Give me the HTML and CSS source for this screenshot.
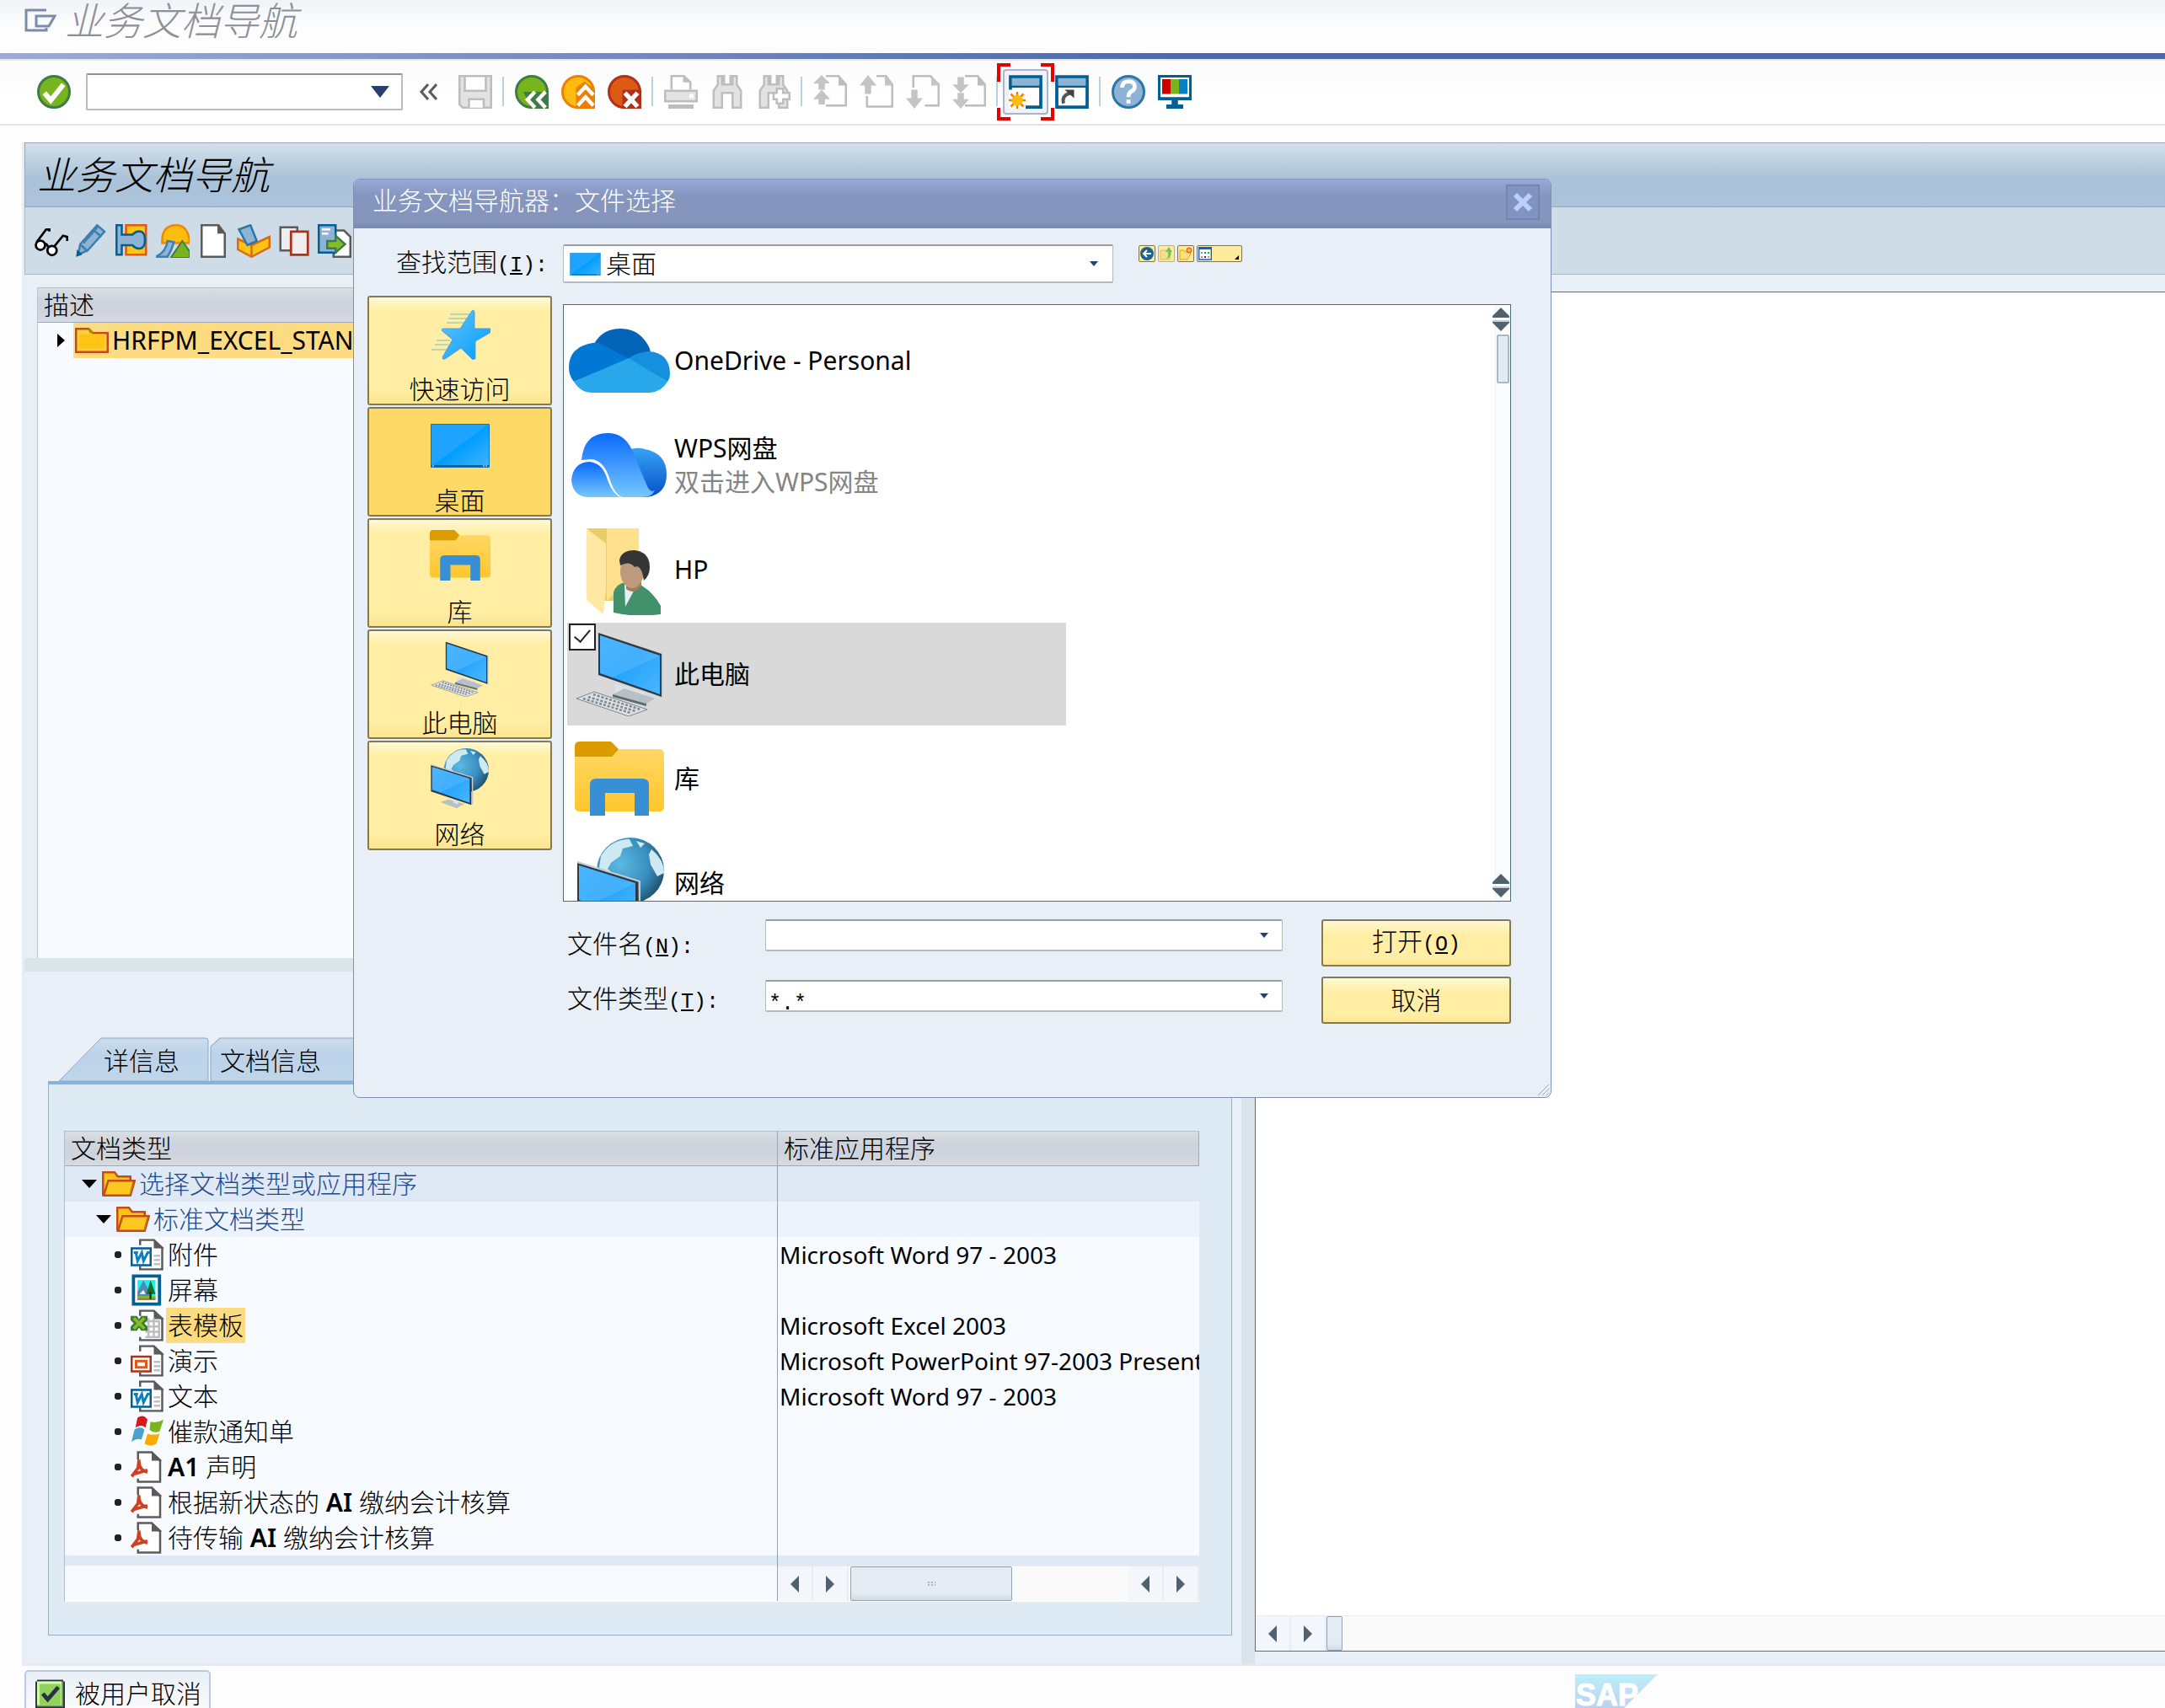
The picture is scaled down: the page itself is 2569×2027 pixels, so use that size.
FILE: index.html
```html
<!DOCTYPE html>
<html lang="zh-CN">
<head>
<meta charset="utf-8">
<title>业务文档导航</title>
<link rel="stylesheet" href="styles.css">
</head>
<body>
<svg class="defs" aria-hidden="true">
  <defs>
    <linearGradient id="gScreen" x1="0" y1="0" x2="1" y2="1"><stop offset="0" stop-color="#33acff"/><stop offset=".5" stop-color="#27a5fd"/><stop offset="1" stop-color="#4ab6ff"/></linearGradient>
    <linearGradient id="gDesk" x1="0" y1="0" x2="1" y2="1"><stop offset=".49" stop-color="#1ea4ff"/><stop offset=".5" stop-color="#009dff"/><stop offset="1" stop-color="#41b5ff"/></linearGradient>
    <linearGradient id="gFolder" x1="0" y1="0" x2="0" y2="1"><stop offset="0" stop-color="#ffd96b"/><stop offset="1" stop-color="#ffc62d"/></linearGradient>
    <linearGradient id="gStar" x1="0" y1="0" x2="1" y2="1"><stop offset="0" stop-color="#62c4ff"/><stop offset="1" stop-color="#009cfb"/></linearGradient>
    <linearGradient id="gWps" x1="0" y1="0" x2="0" y2="1"><stop offset="0" stop-color="#0a69fa"/><stop offset="1" stop-color="#76c8ff"/></linearGradient>
    <linearGradient id="gWps2" x1="0" y1="0" x2="0" y2="1"><stop offset="0" stop-color="#36a3f7"/><stop offset="1" stop-color="#0550c8"/></linearGradient>
    <radialGradient id="gGlobe" cx=".35" cy=".4" r=".7"><stop offset="0" stop-color="#5cb9e4"/><stop offset=".6" stop-color="#3a8fc0"/><stop offset="1" stop-color="#1d4f6c"/></radialGradient>
    <linearGradient id="gTab" x1="0" y1="0" x2="0" y2="1"><stop offset="0" stop-color="#cbdcec"/><stop offset=".4" stop-color="#bdd3e9"/><stop offset="1" stop-color="#bfd5ea"/></linearGradient>
    <linearGradient id="gSap" x1="0" y1="0" x2="0" y2="1"><stop offset="0" stop-color="#bdeefb"/><stop offset="1" stop-color="#bacde9"/></linearGradient>
  </defs>
  <symbol id="page" viewBox="0 0 16 16"><path d="M2.500.5h8l3 4v11h-11z" fill="#fff" stroke="#5b5b5b"/><path d="M10 .5v4h4z" fill="#5b5b5b"/></symbol>
  <symbol id="gpage" viewBox="0 0 16 16"><path d="M6 .5h6l3.500 4v10H7M15.500 14.500H6" fill="none" stroke="#bdbdbd"/><path d="M12 0v5h4z" fill="#bdbdbd"/></symbol>
  <symbol id="tri-l" viewBox="0 0 10 20"><path d="M10 0v20L0 10z" fill="#50616f"/></symbol>
  <symbol id="tri-r" viewBox="0 0 10 20"><path d="M0 0v20L10 10z" fill="#50616f"/></symbol>
  <symbol id="bino" viewBox="0 0 16 16"><path d="M3.500 .5h2v4h5v-4h2v4l2 3v8h-4v-7h-5v7h-4v-8l2-3z" fill="#e2e2e2" stroke="#bdbdbd"/><path d="M7 0h2v4H7z" fill="#fff"/><path d="M6.500 0v4.500M9.500 0v4.500" stroke="#bdbdbd"/></symbol>
  <symbol id="folder" viewBox="0 0 16 12"><path d="M.5.5h6l2 2h7v9H.5z" fill="#ffd041" stroke="#c74a1e"/><path d="M2 3h12v7H2z" fill="#ffc414"/><path d="M6 .5h1l2 2H7z" fill="#b38600"/></symbol>
  <symbol id="ofolder" viewBox="0 0 16 12"><path d="M.5 11.500V.5h5.500l1.500 2h6v3" fill="#ffc414" stroke="#c74a1e"/><path d="M3 4.500h12.500l-2 7H.8z" fill="#ffc821" stroke="#c74a1e"/><path d="M14.800 5l-1.500 6" stroke="#b38600" stroke-width=".6"/></symbol>
  <symbol id="docright" viewBox="0 0 16 15"><path d="M4.500 3V.5h6.500l4 4v10H4.500V13" fill="#fff" stroke="#5b5b5b"/><path d="M11 0v4.500h5z" fill="#5b5b5b"/></symbol>
  <symbol id="word" viewBox="0 0 16 15"><use href="#docright" width="16" height="15"/><path d="M11 8h3M11 10h3M11 12h3" stroke="#c0c0c0"/><path d="M.5 4.500h9v8h-9z" fill="#fff" stroke="#005f94"/><path d="M1.500 6.500h2M2.500 6.500l.8 4 2-4 .8 4 2-4h1" fill="none" stroke="#0a80c4" stroke-width="1.200"/></symbol>
  <symbol id="ppt" viewBox="0 0 16 15"><use href="#docright" width="16" height="15"/><path d="M11 8h3M11 10h3M11 12h3" stroke="#c0c0c0"/><path d="M.5 5.500h9v7h-9z" fill="#fff" stroke="#b0301a"/><path d="M2.600 7.600h4.800v3H2.600z" fill="#fff" stroke="#dc5a14" stroke-width="1.200"/></symbol>
  <symbol id="xls" viewBox="0 0 16 15"><use href="#docright" width="16" height="15"/><path d="M7 5.500h7M7 8h7M7 10.500h7M7 13h7M8.500 4v9M11 4v9M13.500 5v8" stroke="#bdbdbd"/><path d="M0 3h3l1 1.500L5 3h3v2L6.500 6.500 8 8v2H5L4 8.500 3 10H0V8l1.500-1.500L0 5z" fill="#3f7a35"/><path d="M1.500 4L6.500 9M6.500 4L1.500 9" stroke="#86bc25" stroke-width="1.500"/></symbol>
  <symbol id="pic" viewBox="0 0 16 16"><path d="M1 1h13v14H1z" fill="#fff" stroke="#005f94" stroke-width="1.600"/><path d="M3 3h9v10H3z" fill="#12f4f4"/><path d="M3 9l3-6 3 6v3H3z" fill="#5588b0"/><path d="M4 10l2-2 1 2z" fill="#fff"/><path d="M3 11h9v1H3z" fill="#86bc25"/><path d="M3 12h9v1H3z" fill="#a97b1d"/><path d="M9.500 3l2.500 7H7.500z" fill="#176b2c"/><path d="M9.500 9v3.500" stroke="#0c3d17"/></symbol>
  <symbol id="win" viewBox="0 0 16 16"><path d="M3 1q3-2 5 1L7 6Q5 4 2 6z" fill="#d41a1a"/><path d="M9.500 3q3 1 6.500-1l-2 6q-3 1-5-1z" fill="#7ab51d"/><path d="M1.500 7q3-2 5 0L5 12Q3 11 0 13z" fill="#4aa0cf"/><path d="M8 9q3 1 6 0l-1.500 5q-3 2-6 0z" fill="#f8ab00"/></symbol>
  <symbol id="pdf" viewBox="0 0 16 15"><path d="M3.500 4V.5h6.500l4 4v10H3.500V13" fill="#fff" stroke="#5b5b5b"/><path d="M10 0v4.500h5z" fill="#5b5b5b"/><path d="M4 4l-.5 4-3 4M4 5q0 4 4 5M1 11l7-2" fill="none" stroke="#cc4222" stroke-width="1.500"/></symbol>
  <symbol id="desk" viewBox="0 0 70 52"><path d="M.5.5h69v51H.5z" fill="url(#gDesk)" stroke="#1272b4"/><path d="M1 49h68v2H1z" fill="#0a5f9c"/><path d="M2 50h2M62 50h2M65 50h2" stroke="#fff" stroke-width="1"/></symbol>
  <symbol id="lib" viewBox="0 0 106 88"><path d="M0 6q0-6 6-6h36l8 9h50q6 0 6 6v62q0 6-6 6H6q-6 0-6-6z" fill="url(#gFolder)"/><path d="M0 18V6q0-6 6-6h36q2 0 4 3l6 6-6 7q-1 2-3 2z" fill="#dc9b00"/><path d="M18 88V51q0-7 8-7h54q8 0 8 7v37H71V61H36v27z" fill="#388fd6"/></symbol>
  <symbol id="pc" viewBox="0 0 104 100"><path d="M46 74V62l34 10v8z" fill="#dfe3e6"/><path d="M43 74l14-7 36 12-10 6z" fill="#b7c0c6"/><path d="M43 74v3l40 11v-3z" fill="#5d6a72"/><path d="M27 1l76 25v51l-3 1z" fill="#c8d0d6"/><path d="M26 1l75 25v51L26 51z" fill="#2b3a45"/><path d="M28 4l71 24v46L28 49z" fill="url(#gScreen)"/><path d="M28 4l71 24L43 54l-15-5z" fill="#fff" opacity=".12"/><path d="M0 79l21-8 63 21-22 8z" fill="#dde1e3" stroke="#7d878d"/><path d="M8 79l56 17M14 77l56 17M20 74l56 18" stroke="#7f888e" stroke-width="2.500" stroke-dasharray="3 2"/></symbol>
  <symbol id="net" viewBox="0 0 104 108"><ellipse cx="63" cy="39" rx="40" ry="39" fill="url(#gGlobe)"/><path d="M28 22q12-20 34-20l4 8-12 3-3 9-11 8-5 9-9-3zM88 14q15 12 15 28l-8 4-8-14-2-12zM33 36l6 3 1 10-6-2zM70 4l10 3-5 5z" fill="#cdeaf3"/><path d="M17 96l14-5 29 8-14 8z" fill="#b7c0c6"/><path d="M40 82l8 3v15l-8-3z" fill="#dfe3e6"/><path d="M0 30l72 22v49L0 77z" fill="#2b3a45"/><path d="M2 33l67 21v43L2 74z" fill="url(#gScreen)"/><path d="M2 33l67 21-52 25-15-5z" fill="#fff" opacity=".12"/><path d="M0 29l74 23v48" fill="none" stroke="#c3ccd2" stroke-width="2"/></symbol>
  <symbol id="vscroll" viewBox="0 0 22 28"><path d="M11 0l10 10v2H1v-2z" fill="#50616f"/><path d="M1 15h20v3L11 28 1 18z" fill="#50616f"/><path d="M1 15h20v2H1z" fill="#c8cccf"/></symbol>
</svg>

<header class="titlebar">
  <svg class="sys-icon" viewBox="0 0 38 28"><path d="M26 2H2v24h24v-3M14 9h22l-7 12H14z" fill="none" stroke="#7d8bab" stroke-width="3"/></svg>
  <h1>业务文档导航</h1>
</header>

<nav class="std-toolbar" aria-label="标准工具栏">
  <button class="ib" aria-label="确认"><svg viewBox="0 0 16 16"><circle cx="8" cy="8" r="7.400" fill="#78b41e" stroke="#3e7b46" stroke-width="1.200"/><path d="M3.500 8.500l3 3.500L12.500 4.500" fill="none" stroke="#fff" stroke-width="2.400"/></svg></button>
  <div class="command"><input type="text" aria-label="命令"><button aria-label="命令历史"><svg viewBox="0 0 22 14"><path d="M0 0h22L11 14z" fill="#29406f"/></svg></button></div>
  <button class="collapse" aria-label="收起"><svg viewBox="0 0 22 20"><path d="M11 1L3 10l8 9M21 1l-8 9 8 9" fill="none" stroke="#5b5b5b" stroke-width="3"/></svg></button>
  <button class="ib" aria-label="保存"><svg viewBox="0 0 16 16"><path d="M.5.5h15v15H2L.5 14z" fill="#e2e2e2" stroke="#bdbdbd"/><path d="M3 .5h10v7H3zM5 15.500V11.500h7v4" fill="#fff" stroke="#bdbdbd"/></svg></button>
  <span class="sep"></span>
  <div class="grp">
    <button class="ib" aria-label="后退"><svg viewBox="0 0 16 16"><circle cx="8" cy="8" r="7.400" fill="#78b41e" stroke="#3e7b46" stroke-width="1.200"/><path d="M4 8h12v8H8z" fill="#3e7b46"/><path d="M9.500 8L6 11.700l3.500 3.800M14.500 8L11 11.700l3.500 3.800" fill="none" stroke="#fff" stroke-width="1.800"/></svg></button>
    <button class="ib" aria-label="退出"><svg viewBox="0 0 16 16"><circle cx="8" cy="8" r="7.400" fill="#fdbd10" stroke="#ee7f00" stroke-width="1.200"/><path d="M7 6l4-3 5 4v9H7z" fill="#ee7f00"/><path d="M7.800 9.500L11.500 5.500l3.700 4M7.800 14.500l3.700-4 3.700 4" fill="none" stroke="#fff" stroke-width="1.800"/></svg></button>
    <button class="ib" aria-label="取消"><svg viewBox="0 0 16 16"><circle cx="8" cy="8" r="7.400" fill="#dc5a14" stroke="#b0301a" stroke-width="1.200"/><path d="M7 7h9v9H7z" fill="#b0301a"/><path d="M8.200 8.500l6 6.500M14.200 8.500l-6 6.500" stroke="#fff" stroke-width="2.200"/></svg></button>
  </div>
  <span class="sep"></span>
  <div class="grp">
    <button class="ib" aria-label="打印"><svg viewBox="0 0 16 16"><path d="M3.500 7V.5h6l3 3V7" fill="#fff" stroke="#bdbdbd"/><path d="M9 .5v3h3.500z" fill="#bdbdbd"/><path d="M.5 7.500h15v5H.5z" fill="#e2e2e2" stroke="#bdbdbd"/><path d="M12 9h2v2h-2z" fill="#fff"/><path d="M2 14h12v2H2z" fill="#bdbdbd"/></svg></button>
    <button class="ib" aria-label="查找"><svg><use href="#bino"/></svg></button>
    <button class="ib" aria-label="继续查找"><svg viewBox="0 0 16 16"><use href="#bino" width="16" height="16"/><path d="M9.500 6.500h3v2h3v3h-3v2h-3v-2H8v-3h1.500z" fill="#fff" stroke="#bdbdbd"/></svg></button>
  </div>
  <span class="sep"></span>
  <div class="grp">
    <button class="ib" aria-label="首页"><svg viewBox="0 0 16 16"><use href="#gpage" width="16" height="16"/><path d="M4 0l4 4H5.500v3H2.500V4H0zM4 7l4 4.500H5.500V14H2.500v-2.500H0z" fill="#c4c4c4"/></svg></button>
    <button class="ib" aria-label="上一页"><svg viewBox="0 0 16 16"><path d="M3.500 10v5h12V4.500l-3-4H8" fill="none" stroke="#bdbdbd"/><path d="M12 0v5h4zM4 0l4 5H5.500v4H2.500V5H0z" fill="#c4c4c4"/></svg></button>
    <button class="ib" aria-label="下一页"><svg viewBox="0 0 16 16"><path d="M3.500 6V.5h8l4 4v10H9" fill="none" stroke="#bdbdbd"/><path d="M12 0v5h4zM4 16l4-5H5.500V7H2.500v4H0z" fill="#c4c4c4"/></svg></button>
    <button class="ib" aria-label="末页"><svg viewBox="0 0 16 16"><use href="#gpage" width="16" height="16"/><path d="M4 8.500L8 4.500H5.500V1H2.500v3.500H0zM4 16l4-4.500H5.500V8.500H2.500v3H0z" fill="#c4c4c4"/></svg></button>
  </div>
  <span class="sep"></span>
  <div class="grp">
    <button class="ib focus" aria-label="创建新会话"><svg class="frame" viewBox="0 0 68 68"><rect x="8" y="8" width="52" height="52" rx="3" fill="#eff2f8" stroke="#aab4cf" stroke-width="2"/><path d="M2 22V2h14M52 2h14v20M2 53v13h14M52 66h14V53" fill="none" stroke="#e60000" stroke-width="4"/></svg><svg viewBox="0 0 16 16"><path d="M.8.8h14.400v14.400H.8z" fill="#fff" stroke="#005f94" stroke-width="1.500"/><path d="M1.500 1.500h13V5h-13z" fill="#8fb3d5"/><path d="M1 5.500h14" stroke="#005f94"/><path d="M0 7h8v9H0z" fill="#fff"/><path d="M4 8v8M0 12h8M1 9l6 6M7 9l-6 6" stroke="#ee7f00"/><circle cx="4" cy="12" r="2.600" fill="#fdbd10"/></svg></button>
    <button class="ib" aria-label="创建快捷方式"><svg viewBox="0 0 16 16"><path d="M.8.8h14.400v14.400H.8z" fill="#fff" stroke="#005f94" stroke-width="1.500"/><path d="M1.500 1.500h13V5h-13z" fill="#8fb3d5"/><path d="M1 5.500h14" stroke="#005f94"/><path d="M4 13.500q-1-4 3.500-5" fill="none" stroke="#555" stroke-width="1.600"/><path d="M4.500 7H9v4z" fill="#444"/></svg></button>
  </div>
  <span class="sep"></span>
  <div class="grp">
    <button class="ib" aria-label="帮助"><svg viewBox="0 0 16 16"><circle cx="8" cy="8" r="7.400" fill="#8fb3d5" stroke="#2a76a8" stroke-width="1.200"/><path d="M5 6q0-3 3-3t3 2.500q0 1.500-1.500 2.200T8 10.500M8 11.700v1.800" fill="none" stroke="#fff" stroke-width="1.900"/></svg></button>
    <button class="ib" aria-label="定制本地布局"><svg viewBox="0 0 16 16"><path d="M.6.6h14.800v10.800H.6z" fill="#fff" stroke="#005f94" stroke-width="1.200"/><path d="M2 2h4v7H2z" fill="#c80000"/><path d="M6 2h4v7H6z" fill="#78b41e"/><path d="M10 2h4v7h-4z" fill="#0a80c4"/><path d="M0 10.500h16V12H0zM6.500 12h3v2H12v2H4v-2h2.500z" fill="#005f94"/></svg></button>
  </div>
</nav>

<main class="window">
  <h2>业务文档导航</h2>
  <div class="app-toolbar">
    <button class="ib" aria-label="显示"><svg viewBox="0 0 16 16"><path d="M1 8.500L5.500 2.500h1.500v1M9 11L13.500 5.500 15.500 6v2M4.500 9.500q1.500-.5 2 1.500" fill="none" stroke="#000" stroke-width="1.100"/><circle cx="2.800" cy="10" r="2.200" fill="#fff" stroke="#000" stroke-width="1.100"/><circle cx="8.300" cy="12.500" r="2.200" fill="#fff" stroke="#000" stroke-width="1.100"/></svg></button>
    <button class="ib" aria-label="更改"><svg viewBox="0 0 16 16"><path d="M1.500 14.500l1-5 8-9 3.500 3-8 9z" fill="#8fb3d5" stroke="#3d7fae"/><path d="M3 10l3 3M4 9l7-8M8.500 2.500l4 3.500" stroke="#3d7fae"/><path d="M1 12l2.500 2.500L.5 15.500z" fill="#005f94"/></svg></button>
    <button class="ib" aria-label="其他对象"><svg viewBox="0 0 16 16"><path d="M5 .5h9.500v14H5z" fill="#ffc414" stroke="#dc5a14"/><path d="M.5.5H3V5h5q2-2 4-1.500t2 4-2 4-4-1.500H3v4.500H.5z" fill="#8fb3d5" stroke="#005f94"/></svg></button>
    <button class="ib" aria-label="全景"><svg viewBox="0 0 16 16"><path d="M3 9q-.5-8 6-8.500t7 8.500z" fill="#fdbd10" stroke="#ee8a00"/><path d="M0 15.500Q5 13 5.500 8l3 .5q-1 4-3 7z" fill="#8fb3d5" stroke="#3d7fae"/><path d="M7 16l5.500-8 3.500 5v3z" fill="#78b41e" stroke="#3e7b46" stroke-width=".8"/></svg></button>
    <button class="ib" aria-label="创建"><svg><use href="#page"/></svg></button>
    <button class="ib" aria-label="导入"><svg viewBox="0 0 16 16"><path d="M.5 7L7 10l8.500-4v5L7 15.500.5 12z" fill="#ffc414" stroke="#dc6a14"/><path d="M7 10v5.500" stroke="#dc6a14"/><path d="M1 2.500L6.500.5l3 7.500-4.500 2z" fill="#8fb3d5" stroke="#2a76a8"/></svg></button>
    <button class="ib" aria-label="复制"><svg viewBox="0 0 16 16"><path d="M1.500 1.500h8v11h-8z" fill="#eee" stroke="#5b5b5b"/><path d="M6.500 3.500h8v11h-8z" fill="#eee" stroke="#b0301a" stroke-width="1.100"/></svg></button>
    <button class="ib" aria-label="导出"><svg viewBox="0 0 16 16"><path d="M7.500 3h5l3 3v9.500h-8z" fill="#fff" stroke="#5b5b5b"/><path d="M.5.500h8v13h-8z" fill="#8fb3d5" stroke="#005f94"/><path d="M2 2.500h4M2 4.500h3" stroke="#fff"/><path d="M4.500 8h4V5.500l4.500 4-4.500 4V11.500h-4z" fill="#86bc25" stroke="#3e7b46"/></svg></button>
  </div>

  <div class="work">
    <section class="left">
      <div class="tree">
        <div class="th">描述</div>
        <div class="tree-row"><svg class="twist" viewBox="0 0 9 16"><path d="M0 0v16l9-8z"/></svg><span class="hit"><svg class="fold"><use href="#folder"/></svg>HRFPM_EXCEL_STAN</span></div>
      </div>
      <div class="split-h"></div>
      <div class="details">
        <div class="tabs" role="tablist">
          <button role="tab" class="tab first"><svg viewBox="0 0 180 52" preserveAspectRatio="none"><path d="M1 52L51 1h124q3 0 3 3v48z" fill="url(#gTab)" stroke="#8fa9c6"/></svg><span>详信息</span></button>
          <button role="tab" class="tab second"><svg viewBox="0 0 200 52" preserveAspectRatio="none"><path d="M1 52V11L11 1h189v51z" fill="url(#gTab)" stroke="#8fa9c6"/></svg><span>文档信息</span></button>
        </div>
        <div class="tabpanel">
          <table class="doctypes">
            <colgroup><col class="c1"><col></colgroup>
            <thead><tr><th>文档类型</th><th>标准应用程序</th></tr></thead>
            <tbody>
              <tr class="lv0"><td><div class="node"><svg class="open" viewBox="0 0 18 10"><path d="M0 0h18L9 10z"/></svg><svg class="fold"><use href="#ofolder"/></svg><span>选择文档类型或应用程序</span></div></td><td></td></tr>
              <tr class="lv1"><td><div class="node"><svg class="open" viewBox="0 0 18 10"><path d="M0 0h18L9 10z"/></svg><svg class="fold"><use href="#ofolder"/></svg><span>标准文档类型</span></div></td><td></td></tr>
              <tr><td><div class="node"><i></i><svg class="di"><use href="#word"/></svg><span>附件</span></div></td><td>Microsoft Word 97 - 2003</td></tr>
              <tr><td><div class="node"><i></i><svg class="di"><use href="#pic"/></svg><span>屏幕</span></div></td><td></td></tr>
              <tr><td><div class="node"><i></i><svg class="di"><use href="#xls"/></svg><span class="sel">表模板</span></div></td><td>Microsoft Excel 2003</td></tr>
              <tr><td><div class="node"><i></i><svg class="di"><use href="#ppt"/></svg><span>演示</span></div></td><td>Microsoft PowerPoint 97-2003 Presentation</td></tr>
              <tr><td><div class="node"><i></i><svg class="di"><use href="#word"/></svg><span>文本</span></div></td><td>Microsoft Word 97 - 2003</td></tr>
              <tr><td><div class="node"><i></i><svg class="di"><use href="#win"/></svg><span>催款通知单</span></div></td><td></td></tr>
              <tr><td><div class="node"><i></i><svg class="di"><use href="#pdf"/></svg><span><b>A1</b> 声明</span></div></td><td></td></tr>
              <tr><td><div class="node"><i></i><svg class="di"><use href="#pdf"/></svg><span>根据新状态的 <b>AI</b> 缴纳会计核算</span></div></td><td></td></tr>
              <tr><td><div class="node"><i></i><svg class="di"><use href="#pdf"/></svg><span>待传输 <b>AI</b> 缴纳会计核算</span></div></td><td></td></tr>
            </tbody>
            <tfoot>
              <tr class="band"><td></td><td></td></tr>
              <tr><td></td><td><div class="hscroll"><button aria-label="向左"><svg><use href="#tri-l"/></svg></button><button aria-label="向右"><svg><use href="#tri-r"/></svg></button><span class="thumb"><span class="grip"></span></span><span class="track"></span><button aria-label="向左"><svg><use href="#tri-l"/></svg></button><button aria-label="向右"><svg><use href="#tri-r"/></svg></button></div></td></tr>
            </tfoot>
          </table>
        </div>
      </div>
    </section>
    <div class="split-v"></div>
    <section class="editor">
      <div class="hscroll"><button aria-label="向左"><svg><use href="#tri-l"/></svg></button><button aria-label="向右"><svg><use href="#tri-r"/></svg></button><span class="thumb small"></span><span class="track"></span></div>
    </section>
  </div>
</main>

<footer class="status">
  <div class="message"><svg viewBox="0 0 36 36"><path d="M2 0h32v2h2v34H0V2h2z" fill="#2d2f45"/><path d="M2 2h32v31H2z" fill="#6e9c5c"/><path d="M2 2h30v29H2z" fill="#d2ffa6"/><path d="M5 5h26v26H5z" fill="#8fd35c"/><path d="M9 17l6 7L28 9" fill="none" stroke="#2d2f45" stroke-width="5"/></svg><span>被用户取消</span></div>
  <svg class="sap" viewBox="0 0 98 48"><path d="M0 0h98L50 48H0z" fill="url(#gSap)"/><text x="1" y="37" font-family="Liberation Sans, sans-serif" font-weight="700" font-size="36" fill="#fff" stroke="#fff">SAP</text></svg>
</footer>

<div class="dialog" role="dialog" aria-labelledby="dlg-title">
  <div class="dlg-head"><h3 id="dlg-title">业务文档导航器：文件选择</h3><button class="close" aria-label="关闭"><svg viewBox="0 0 24 24"><path d="M3 3l18 18M21 3L3 21" stroke="#b9d0ff" stroke-width="6"/></svg></button></div>
  <div class="lookin">
    <label for="look">查找范围<span class="key">(<u>I</u>):</span></label>
    <div class="combo big"><svg class="mini"><use href="#desk"/></svg><select id="look"><option>桌面</option></select><svg class="dd" viewBox="0 0 10 6"><path d="M0 0h10L5 6z" fill="#29406f"/></svg></div>
    <div class="minis">
      <button aria-label="返回"><svg viewBox="0 0 16 16"><circle cx="8" cy="8" r="8" fill="#1b6390"/><path d="M13 8H4M8 4L4 8l4 4" fill="none" stroke="#fff" stroke-width="2"/></svg></button>
      <button class="dim" aria-label="向上一级"><svg viewBox="0 0 16 16"><path d="M1 15V4h5l8 1-2 10z" fill="#f6df8c" stroke="#dcc05c"/><path d="M7 14q4-1 3-8H7l4-6 4 6h-2q1 8-6 8z" fill="#79c25a"/></svg></button>
      <button aria-label="新建文件夹"><svg viewBox="0 0 16 16"><path d="M1 15V4h5l1 2h5l2 2-4 7z" fill="#ffe07a" stroke="#d9a520"/><circle cx="12" cy="4" r="3" fill="#ffae3c" stroke="#e8401a"/></svg></button>
      <button class="wide" aria-label="查看"><svg viewBox="0 0 16 16"><path d="M.7 1h14.600v14H.7z" fill="#fff" stroke="#0b62d6" stroke-width="1.400"/><path d="M0 0h16v3H0z" fill="#0b62d6"/><path d="M3 6h2v2H3z" fill="#99a"/><path d="M7 6h2v2H7z" fill="#17c"/><path d="M11 6h2v2h-2z" fill="#2a3"/><path d="M3 11h2v2H3z" fill="#e74"/><path d="M7 11h2v2H7z" fill="#237"/><path d="M11 11h2v2h-2z" fill="#c92"/></svg><svg class="corner" viewBox="0 0 4 4"><path d="M4 0v4H0z"/></svg></button>
    </div>
  </div>
  <div class="dlg-body">
    <div class="places">
      <button class="place"><svg viewBox="0 0 72 60"><path d="M24 6h24M22 11h22M20 16h22M8 37h16M6 42h16M2 48h18" stroke="#a9cdb5" stroke-width="1.500"/><path d="M50 2q3-2 3 2v19h20q3 1 0 4L54 38v20q-1 3-4 1L37 46 18 59q-3 1-3-2l12-21-12-10q-2-3 2-3h19z" fill="url(#gStar)" stroke="#4f9fd6"/></svg><span>快速访问</span></button>
      <button class="place on"><svg><use href="#desk"/></svg><span>桌面</span></button>
      <button class="place"><svg><use href="#lib"/></svg><span>库</span></button>
      <button class="place"><svg><use href="#pc"/></svg><span>此电脑</span></button>
      <button class="place net"><svg><use href="#net"/></svg><span>网络</span></button>
    </div>
    <div class="right">
      <div class="filebox">
        <ul class="files">
          <li><svg viewBox="0 0 120 76"><path d="M30 18Q40 0 61 0t32 18q4 6 4 12L70 40 32 22z" fill="#0364b8"/><path d="M72 36L38 18q-5-2-10-1Q0 22 0 46q0 10 6 17z" fill="#0078d4"/><path d="M70 36q10-8 25-9 25 2 25 27 0 5-3 9z" fill="#1490df"/><path d="M6 63q8 13 22 13h68q14-1 21-13L71 35z" fill="#28a8ea"/></svg><span>OneDrive - Personal</span></li>
          <li><svg viewBox="0 0 120 76"><path d="M70 20q12-4 20-1 26 5 26 30 0 24-24 27H78z" fill="url(#gWps2)"/><path d="M15 32Q18 0 46 0q20 0 29 20l18 43q2 5 6 6l3-1q-4 8-14 8H64Q55 74 49 56 42 32 26 31z" fill="url(#gWps)"/><path d="M3 56q2-21 21-22 14 1 20 16 7 22 17 26H24Q5 76 3 56z" fill="url(#gWps)"/></svg><span>WPS网盘<br><em>双击进入WPS网盘</em></span></li>
          <li><svg viewBox="0 -5 120 108"><path d="M21 0h62v86H32z" fill="#eccb6a"/><path d="M83 0v50L45 86V0z" fill="#ffe08c"/><path d="M21 0l23 18v54l-3 30-20-17z" fill="#ffe7a4"/><path d="M53 100V76q3-10 14-12l16 2q16 8 26 26v10q-30 4-56-2z" fill="#43906d"/><path d="M66 66l14 3-13 24z" fill="#e2f1f3"/><path d="M68 50h18v18q-8 12-18 4z" fill="#a97b52"/><ellipse cx="75" cy="51" rx="14" ry="20" fill="#bc9a7b"/><path d="M60 38q2-12 18-12 18 2 18 20 0 10-7 16-3-20-11-16-6-8-17-2z" fill="#353535"/></svg><span>HP</span></li>
          <li class="picked"><input type="checkbox" checked aria-label="选择此电脑"><svg viewBox="0 0 120 100"><use href="#pc" x="9" width="104" height="100"/></svg><span>此电脑</span></li>
          <li><svg viewBox="0 0 120 88"><use href="#lib" x="7" width="106" height="88"/></svg><span>库</span></li>
          <li><svg viewBox="0 0 120 108"><use href="#net" x="10" width="104" height="108"/></svg><span>网络</span></li>
        </ul>
        <div class="vbar"><svg><use href="#vscroll"/></svg><span class="vthumb"></span><svg class="end"><use href="#vscroll"/></svg></div>
      </div>
      <div class="fields">
        <label for="fname">文件名<span class="key">(<u>N</u>):</span></label>
        <div class="combo"><input id="fname" type="text"><svg class="dd" viewBox="0 0 10 6"><path d="M0 0h10L5 6z" fill="#29406f"/></svg></div>
        <button class="act">打开<span class="key">(<u>O</u>)</span></button>
        <label for="ftype">文件类型<span class="key">(<u>T</u>):</span></label>
        <div class="combo type"><select id="ftype" class="key"><option>*.*</option></select><svg class="dd" viewBox="0 0 10 6"><path d="M0 0h10L5 6z" fill="#29406f"/></svg></div>
        <button class="act">取消</button>
      </div>
    </div>
  </div>
  <svg class="grip-c" viewBox="0 0 16 16"><path d="M2 15L15 2M7 15l8-8M12 15l3-3" stroke="#9aa7bb"/></svg>
</div>
</body>
</html>
```
FILE: styles.css
```css
* { box-sizing: border-box; }
body {
  margin: 0;
  height: 100vh;
  display: flex;
  flex-direction: column;
  position: relative;
  overflow: hidden;
  background: #fdfdfe;
  color: #000;
  font: 300 30px/42px "Noto Sans", "Noto Sans CJK SC", sans-serif;
}
h1, h2, h3 { margin: 0; font-weight: 300; }
b { font-weight: 600; }
button, input, select { font: inherit; color: inherit; margin: 0; padding: 0; border: 0; background: none; border-radius: 0; }
.defs { position: absolute; width: 0; height: 0; }
svg { display: block; flex: none; }

.titlebar {
  height: 72px;
  flex: none;
  display: flex;
  align-items: center;
  gap: 10px;
  padding: 0 0 24px 29px;
  background: linear-gradient(90deg, #9aabd9, #4a69b5 1400px) 0 63px / 100% 7px no-repeat,
    linear-gradient(#e4e8ec, #e4e8ec) 0 70px / 100% 2px no-repeat,
    linear-gradient(#f0f3f7, #fdfdfe 32px);
}
.sys-icon { width: 38px; height: 28px; }
h1, h2 { font-size: 46px; line-height: 48px; font-style: italic; }
h1 { color: #8c9197; }

.std-toolbar {
  height: 77px;
  flex: none;
  display: flex;
  align-items: center;
  padding: 0 44px 2px;
  background: linear-gradient(#fafafb, #fff 40px);
  border-bottom: 2px solid #e1e5ea;
}
.grp { display: flex; gap: 15px; }
.ib { width: 40px; height: 40px; flex: none; position: relative; }
.ib svg { width: 40px; height: 40px; position: relative; }
.ib .frame { position: absolute; left: -14px; top: -14px; width: 68px; height: 68px; }
.sep { width: 2px; height: 35px; margin: 0 13px 0 12px; background: #b9cfe4; }
.command { width: 376px; height: 44px; margin-left: 18px; display: flex; align-items: center; border: 2px solid #bbbcbe; border-top-color: #8e9093; border-radius: 2px; background: #fff; }
.command input { flex: 1; min-width: 0; height: 100%; }
.command button { width: 36px; }
.command button svg { width: 22px; height: 14px; }
.collapse { width: 22px; margin: 0 25px 0 19px; }
.collapse svg { width: 22px; height: 20px; }

.window { flex: 1; min-height: 0; display: flex; flex-direction: column; margin: 20px 0 0 26px; border-left: 3px solid #e8ecf4; background: #e8eff6; border-bottom: 2px solid #e4e9f1; }
h2 {
  height: 77px;
  padding: 13px 0 0 14px;
  border: 1px solid #93a9bb;
  border-right: 0;
  background: linear-gradient(#d3e1ec, #abc3d8 40px, #abc3db);
}
.app-toolbar { display: flex; gap: 8px; align-items: center; height: 80px; padding: 0 11px; background: #cedce7; border: 1px solid #a7b8c8; border-top: 0; border-right: 0; }

.work { flex: 1; min-height: 0; padding: 20px 0 0; display: grid; grid-template-columns: 1444fr 16px 1080fr; }
.left { display: flex; flex-direction: column; min-width: 0; min-height: 0; }
.tree { flex: 1; margin: -5px 0 0 15px; background: #f7faff; border-left: 1px solid #b9c4d3; }
.th, .doctypes th {
  height: 42px;
  padding: 0 7px;
  text-align: left;
  font-weight: 300;
  line-height: 40px;
  border-top: 1px solid #b5c0ce;
  border-bottom: 1px solid #9ca8b8;
  background: linear-gradient(#dadfe2, #cfd3dc 14px, #cfd3dc 28px, #d8dce0);
}
.tree-row { display: flex; align-items: center; height: 42px; padding-left: 23px; font-weight: 400; overflow: hidden; }
.twist { width: 9px; height: 16px; margin-right: 10px; }
.hit { flex: 1; display: flex; align-items: center; gap: 4px; padding-left: 2px; height: 42px; background: #fddb81; }
.fold { width: 40px; height: 30px; }
.split-h { height: 16px; margin-bottom: 78px; background: #dae5ea; }
.split-v { background: #dae5ea; }

.details { margin: 0 11px 34px 28px; }
.tabs { display: flex; padding-left: 12px; }
.tab { position: relative; height: 52px; text-align: left; }
.tab svg { position: absolute; left: 0; top: 0; width: 100%; height: 100%; }
.tab span { position: relative; display: block; padding-top: 4px; }
.first { width: 180px; padding-left: 54px; }
.second { width: 220px; padding-left: 12px; }
.tabpanel { border: 1px solid #8fb0d0; border-top: 4px solid #8bb0da; background: #deebf5; padding: 55px 38px 39px 18px; }
.doctypes { width: 100%; table-layout: fixed; border-collapse: separate; border-spacing: 0; background: #f7faff; border-left: 1px solid #b0bccb; border-bottom: 1px solid #fff; }
.c1 { width: 846px; }
.doctypes th { border-right: 1px solid #9ca8b8; }
.doctypes td { height: 42px; padding: 0 0 0 2px; overflow: hidden; white-space: nowrap; line-height: 42px; font-weight: 400; font-size: 28px; }
.doctypes td:first-child { border-right: 1px solid #93a1b3; padding: 0; font-size: 30px; font-weight: 300; }
.doctypes .lv0 td { background: #dfe9f6; color: #1e4a8f; }
.doctypes .lv1 td { background: #edf3fc; color: #1e4a8f; }
.node { display: flex; align-items: center; height: 42px; padding-left: 59px; }
.lv0 .node { padding-left: 20px; }
.lv1 .node { padding-left: 37px; }
.open { width: 18px; height: 10px; margin-right: 6px; }
.node .fold { margin-right: 4px; }
.node i { width: 8px; height: 8px; border-radius: 3px; background: #222; margin-right: 11px; }
.di { width: 40px; height: 38px; margin-right: 2px; }
.node i ~ span { padding: 0 2px; line-height: 42px; }
.sel { background: #fddb81; }
.doctypes .band td { height: 12px; background: #dfe9f6; }
.doctypes tfoot td { padding: 0; }

.hscroll { display: flex; height: 42px; background: #fafafb; border-top: 1px solid #e9ebf0; }
.hscroll button { width: 42px; display: flex; align-items: center; justify-content: center; background: #f3f6fa; border-right: 2px solid #e9edf2; }
.hscroll button svg { width: 10px; height: 20px; }
.thumb { width: 192px; margin-left: 2px; display: flex; align-items: center; justify-content: center; border: 1px solid #93a3b3; background: linear-gradient(#e4ebf3 80%, #ccdbe6); border-radius: 2px; }
.thumb.small { width: 19px; margin-left: 0; }
.grip { width: 9px; height: 7px; background: repeating-linear-gradient(#e4ebf3 0 1px, transparent 1px 3px), repeating-linear-gradient(90deg, #a8b7c4 0 2px, transparent 2px 4px); }
.track { flex: 1; }
.editor { display: flex; flex-direction: column; justify-content: flex-end; margin-bottom: 15px; background: #fff; border: 1px solid #696b73; border-right: 0; }

.status { height: 50px; flex: none; display: flex; align-items: flex-start; padding-left: 29px; }
.message { display: flex; gap: 12px; width: 221px; height: 56px; margin-top: 5px; padding: 9px 0 0 11px; border: 2px solid #bccadb; border-radius: 5px; background: linear-gradient(#e9eff7, #fdfdfe); line-height: 34px; }
.message svg { width: 35px; height: 36px; }
.sap { width: 98px; height: 48px; margin: 10px 602px 0 auto; }

/* file dialog floating over the work area */
.dialog { position: absolute; left: 419px; top: 212px; width: 1422px; height: 1091px; border: 1px solid #8090b3; border-radius: 8px; background: #e8eff6; }
.dlg-head { display: flex; justify-content: space-between; align-items: flex-start; height: 58px; padding: 6px 13px 0 22px; border-radius: 7px 7px 0 0; border-bottom: 2px solid #7d8cb2; background: linear-gradient(#97a9da, #8595be 20px, #8595be 50px, #7b89ad); color: #fff; }
h3 { font-size: 30px; line-height: 38px; }
.close { width: 40px; height: 42px; border: 2px solid #7585ad; background: #8193c2; display: flex; align-items: center; justify-content: center; }
.close svg { width: 24px; height: 24px; }
.key { font-family: "Liberation Mono", monospace; font-size: 25px; font-weight: 400; }
.lookin { display: flex; align-items: flex-start; padding: 19px 0 0 50px; }
.lookin label { width: 198px; line-height: 42px; }
.combo { display: flex; align-items: center; height: 38px; padding-left: 3px; background: #fff; border: 1px solid #b6b9bd; border-top: 2px solid #9a9da1; border-bottom-width: 2px; border-radius: 2px; }
.combo select { appearance: none; }
.combo select, .combo input { flex: 1; min-width: 0; height: 100%; outline: 0; }
.combo.big { width: 653px; height: 46px; padding-left: 7px; gap: 6px; }
.mini { width: 37px; height: 27px; }
.dd { width: 10px; height: 6px; margin-right: 17px; }
.minis { display: flex; gap: 3px; margin: 1px 0 0 30px; }
.minis button { width: 20px; height: 20px; padding: 1px; display: flex; align-items: center; justify-content: space-between; border: 1px solid #7d7350; border-radius: 2px; background: #ffeb9e; }
.minis .wide { width: 54px; }
.minis svg { width: 16px; height: 16px; }
.minis .corner { width: 5px; height: 5px; margin: 9px 2px 0 0; }
.minis .dim { border-color: #b8b08e; }

.dlg-body { display: flex; align-items: flex-start; gap: 13px; padding: 14px 47px 0 16px; }
.places { display: flex; flex-direction: column; gap: 2px; width: 219px; }
.place, .act { border: 2px solid #80795c; border-radius: 3px; background: linear-gradient(#fff9d5, #ffeea4 16px, #ffeea4 85%, #fbe692); }
.place { height: 130px; display: flex; flex-direction: column; align-items: center; justify-content: space-between; padding-top: 14px; }
.place svg { width: 72px; height: 60px; }
.place.on { background: #ffd966; }
.place.on svg { height: 52px; margin-top: 4px; }
.place:nth-child(n+3) svg { height: 66px; margin-top: -2px; }
.place:nth-child(3) svg { height: 60px; }
.place.net svg { height: 72px; margin-top: -7px; }
.place span { line-height: 34px; }
.right { flex: 1; min-width: 0; padding-top: 10px; }
.filebox { height: 709px; display: flex; justify-content: space-between; overflow: hidden; background: #fff; border: 1px solid #516a78; }
.files { list-style: none; margin: 0; padding: 5px 0 0 4px; width: 596px; font-weight: 400; font-size: 30px; }
.files li { position: relative; display: flex; align-items: center; gap: 5px; height: 122px; margin-bottom: 2px; padding-left: 2px; line-height: 40px; }
.files svg { width: 120px; height: 108px; }
.files em { color: #848484; font-style: normal; }
.files .picked { background: #d9d9d9; }
.files input { position: absolute; left: 2px; top: 1px; width: 32px; height: 32px; appearance: none; background: #fff; border: 2px solid #222; }
.files input::before { content: ""; position: absolute; left: 9px; top: 1px; width: 8px; height: 17px; border: solid #222; border-width: 0 2px 2px 0; transform: rotate(40deg); }
.vbar { width: 22px; display: flex; flex-direction: column; align-items: flex-end; background: linear-gradient(90deg, #fff 4px, #eceef1 4px 5px, #fafbfc 5px); padding: 3px 0 4px; }
.vbar svg { width: 22px; height: 28px; }
.vbar .end { margin-top: auto; }
.vthumb { width: 15px; height: 58px; margin: 4px 1px 0 0; border: 2px solid #a9b8c4; border-radius: 2px; background: linear-gradient(#a8b7c4, #a8b7c4) center / 5px 8px no-repeat, #e2ebf3; background: repeating-linear-gradient(#e2ebf3 0 2px, transparent 2px 4px) center / 5px 8px no-repeat, #e2ebf3; }
.fields { display: grid; grid-template-columns: 235px 614px 1fr; row-gap: 12px; padding: 21px 0 0 5px; }
.fields label { padding-top: 8px; line-height: 42px; }
.fields label:nth-of-type(2) { padding-top: 5px; }
.fields .dd { margin-right: 16px; }
.fields .type { margin-top: 4px; }
.fields .type select { padding-top: 6px; }
.act { height: 56px; margin-left: 46px; }
.grip-c { position: absolute; right: 1px; bottom: 1px; width: 16px; height: 16px; }
```
